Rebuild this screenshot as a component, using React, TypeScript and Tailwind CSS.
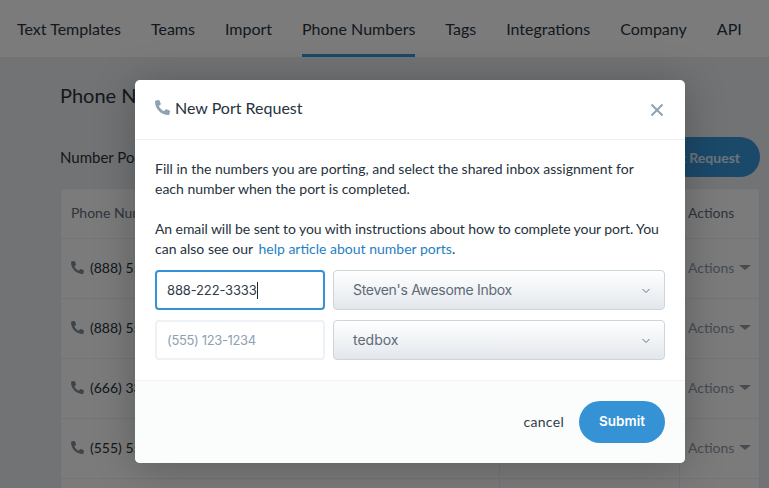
import React from "react";
import { FaPhone } from "react-icons/fa";

const tabs = ["Text Templates", "Teams", "Import", "Phone Numbers", "Tags", "Integrations", "Company", "API"];
const rows = ["(888) 555-1234", "(888) 555-4321", "(666) 333-2211", "(555) 555-9090", ""];

const Phone = ({ className }: { className: string }) => (
  <FaPhone className={`-scale-x-100 ${className}`} />
);

const Caret = () => (
  <svg width="10" height="6" viewBox="0 0 10 6" className="mt-[2px] text-[#627382]">
    <path d="M1.5 1 L5 4.5 L8.5 1" fill="none" stroke="currentColor" strokeWidth="1" />
  </svg>
);

const SelectBox = ({ label, className }: { label: string; className?: string }) => (
  <div className="flex h-10 flex-1 items-center justify-between rounded border border-[#cbd5dc] bg-gradient-to-b from-white to-[#e3e7ec] pl-[19px] pr-[13px] font-['Inter',sans-serif] text-[14px] text-[#5c6b79]">
    <span className={className}>{label}</span>
    <Caret />
  </div>
);

const App: React.FC = () => {
  return (
    <div className="relative h-[488px] w-[769px] overflow-hidden bg-[#e4e6e9] font-['Lato',sans-serif] text-[#26323d]">
      {/* page behind the modal */}
      <nav className="flex h-[57px] gap-[30px] bg-[#f6f6f6] pl-[17px] text-[16px]">
        {tabs.map((tab) => (
          <div
            key={tab}
            className={`flex h-full items-center border-b-[3px] pt-[3px] ${
              tab === "Phone Numbers" ? "border-[#3592d4]" : "border-transparent"
            }`}
          >
            {tab}
          </div>
        ))}
      </nav>

      <main className="pl-[60px] pr-[9px]">
        <h1 className="pt-[26px] text-[20px] leading-6">Phone Numbers</h1>
        <div className="mt-[30px] flex h-10 items-center justify-between">
          <span className="text-[15px]">Number Ports</span>
          <button className="flex h-10 w-[200px] items-center justify-end rounded-full bg-[#3592d4] pr-5 text-[14px] font-bold text-white/80">
            New Port Request
          </button>
        </div>

        <div className="mt-[11px] rounded border border-[#dfe3e7] bg-[#f6f6f6]">
          <div className="flex h-[50px] items-center border-b border-[#e6e9ec] pb-[2px] text-[14px] text-[#5c6b79]">
            <div className="w-[438px] pl-[10px]">Phone Number</div>
            <div className="w-[181px]"></div>
            <div className="pl-[8px]">Actions</div>
          </div>
          {rows.map((row, i) => (
            <div key={i} className="flex h-[60px] items-start border-b border-[#e6e9ec] pt-[18px] text-[14px]">
              <div className="flex w-[438px] items-center gap-[6px] pl-[10px]">
                {row && <Phone className="h-[13px] w-[13px] text-[#7a8b99]" />}
                {row}
              </div>
              <div className="h-[60px] w-[181px] -translate-y-[18px] border-x border-[#e6e9ec]"></div>
              {row && (
                <div className="flex items-center gap-[5px] pl-[8px] text-[#8a97a3]">
                  Actions
                  <span className="h-0 w-0 border-x-[6px] border-t-[5px] border-x-transparent border-t-[#8a97a3]"></span>
                </div>
              )}
            </div>
          ))}
        </div>
      </main>

      {/* modal */}
      <div className="absolute inset-0 bg-black/50 pl-[135px] pt-[80px]">
        <div className="w-[550px] overflow-hidden rounded-[5px] bg-white shadow-[0_4px_40px_rgba(0,0,0,0.25)]">
          <header className="flex h-[60px] items-center justify-between border-b border-[#eef0f2] pb-[4px] pl-5 pr-[21px]">
            <div className="flex items-center gap-[5px] text-[16px]">
              <Phone className="h-[15px] w-[15px] text-[#8ba3b5]" />
              New Port Request
            </div>
            <svg width="14" height="14" viewBox="0 0 14 14" className="mt-1 text-[#8ba3b5]">
              <path d="M1.5 1.5 L12.5 12.5 M12.5 1.5 L1.5 12.5" stroke="currentColor" strokeWidth="2" fill="none" />
            </svg>
          </header>

          <div className="px-5 pt-5 text-[14px] leading-5">
            <p className="-translate-y-px whitespace-nowrap">
              Fill in the numbers you are porting, and select the shared inbox assignment for
              <br />
              each number when the port is completed.
            </p>
            <p className="mt-5 -translate-y-px whitespace-nowrap">
              <span className="tracking-[-0.08px]">
                An email will be sent to you with instructions about how to complete your port. You
              </span>
              <br />
              can also see our <span className="ml-[2px] text-[#1f7fc4]">help article about number ports</span>.
            </p>

            <div className="mt-[10px] flex flex-col gap-[10px]">
              <div className="flex gap-2">
                <div className="flex h-10 w-[170px] items-center rounded border-2 border-[#3592d4] pl-[10px] font-['Inter',sans-serif] text-[13px] tracking-[-0.15px] text-[#2f3c48]">
                  888-222-3333
                  <span className="h-[17px] w-px bg-[#1d2730]"></span>
                </div>
                <SelectBox label="Steven's Awesome Inbox" className="tracking-[-0.3px]" />
              </div>
              <div className="flex gap-2">
                <div className="flex h-10 w-[170px] items-center rounded border-2 border-[#eef2f6] pl-[10px] font-['Inter',sans-serif] text-[13px] tracking-[-0.35px] text-[#8fa1b2]">
                  (555) 123-1234
                </div>
                <SelectBox label="tedbox" />
              </div>
            </div>
          </div>

          <footer className="mt-5 flex h-[83px] items-center justify-end gap-[15px] border-t border-[#f1f3f4] bg-[#fbfdfd] px-5 pb-px">
            <span className="text-[14px] tracking-[0.3px] text-[#2f3c48]">cancel</span>
            <button className="h-[42px] w-[86px] rounded-full bg-[#3592d4] font-['Inter',sans-serif] text-[13.5px] font-semibold text-white">
              Submit
            </button>
          </footer>
        </div>
      </div>
    </div>
  );
};

export default App;
